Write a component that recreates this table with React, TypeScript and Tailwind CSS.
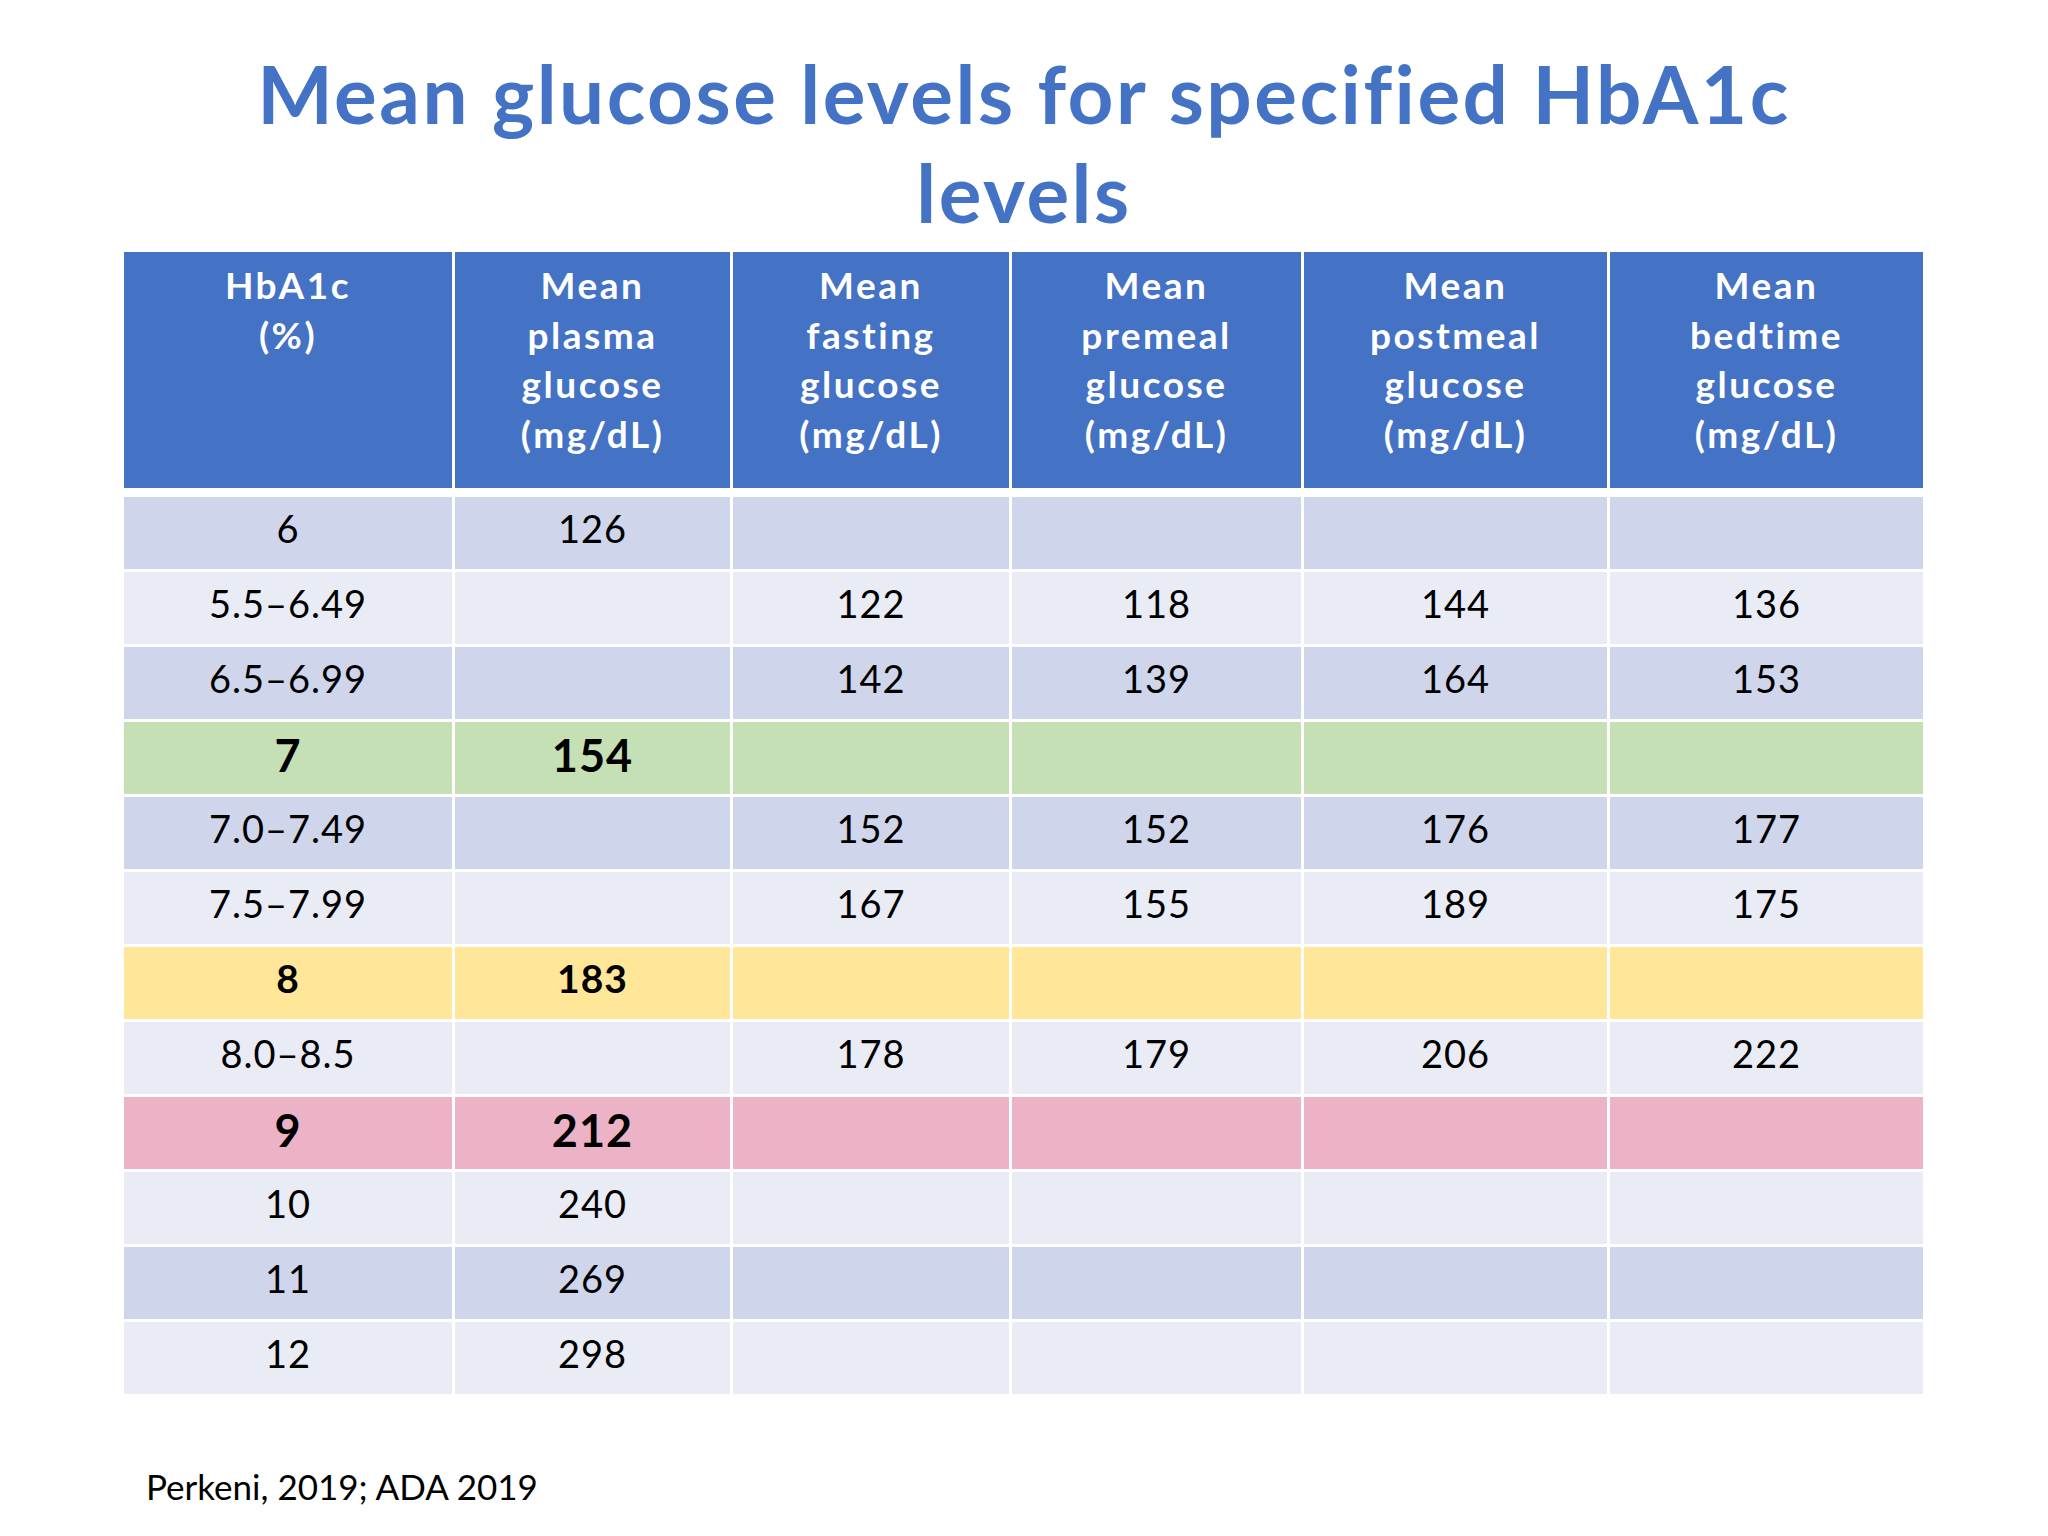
import React from 'react';

type Row = {
  cells: string[];
  tone: 'dark' | 'light' | 'green' | 'yellow' | 'pink';
  bold?: 'lg' | 'md';
};

const headers: string[][] = [
  ['HbA1c', '(%)'],
  ['Mean', 'plasma', 'glucose', '(mg/dL)'],
  ['Mean', 'fasting', 'glucose', '(mg/dL)'],
  ['Mean', 'premeal', 'glucose', '(mg/dL)'],
  ['Mean', 'postmeal', 'glucose', '(mg/dL)'],
  ['Mean', 'bedtime', 'glucose', '(mg/dL)'],
];

const rows: Row[] = [
  { cells: ['6', '126', '', '', '', ''], tone: 'dark' },
  { cells: ['5.5–6.49', '', '122', '118', '144', '136'], tone: 'light' },
  { cells: ['6.5–6.99', '', '142', '139', '164', '153'], tone: 'dark' },
  { cells: ['7', '154', '', '', '', ''], tone: 'green', bold: 'lg' },
  { cells: ['7.0–7.49', '', '152', '152', '176', '177'], tone: 'dark' },
  { cells: ['7.5–7.99', '', '167', '155', '189', '175'], tone: 'light' },
  { cells: ['8', '183', '', '', '', ''], tone: 'yellow', bold: 'md' },
  { cells: ['8.0–8.5', '', '178', '179', '206', '222'], tone: 'light' },
  { cells: ['9', '212', '', '', '', ''], tone: 'pink', bold: 'lg' },
  { cells: ['10', '240', '', '', '', ''], tone: 'light' },
  { cells: ['11', '269', '', '', '', ''], tone: 'dark' },
  { cells: ['12', '298', '', '', '', ''], tone: 'light' },
];

const toneClass: Record<Row['tone'], string> = {
  dark: 'bg-[#cfd5ea]',
  light: 'bg-[#e9ebf5]',
  green: 'bg-[#c5e0b4]',
  yellow: 'bg-[#ffe699]',
  pink: 'bg-[#ecb3c7]',
};

const textClass = (bold?: Row['bold']) => {
  if (bold === 'lg') return 'text-[45px] font-bold pb-[4px]';
  if (bold === 'md') return 'text-[39px] font-bold pb-[10px]';
  return 'text-[38px] pb-[10px]';
};

const cols = 'grid grid-cols-[328px_275px_276px_289px_303px_313px] gap-x-[3px]';

export default function App() {
  return (
    <div className="w-[2048px] h-[1536px] bg-white font-[family-name:Lato,sans-serif] text-black">
      <h1 className="pt-[44px] text-center text-[80px] leading-[99px] font-bold tracking-[2.5px] text-[#4472c4]">
        Mean glucose levels for specified HbA1c
        <br />
        levels
      </h1>

      <div className="mt-[10px] ml-[124px] w-[1799px]">
        <div className={`${cols} bg-white`}>
          {headers.map((lines, i) => (
            <div
              key={i}
              className="h-[236px] bg-[#4472c4] pt-[8px] text-center text-[37px] leading-[49.5px] font-bold tracking-[2.5px] text-white"
            >
              {lines.map((l) => (
                <div key={l}>{l}</div>
              ))}
            </div>
          ))}
        </div>

        <div className="mt-[9px] flex flex-col gap-y-[3px]">
          {rows.map((row, r) => (
            <div key={r} className={cols}>
              {row.cells.map((c, i) => (
                <div
                  key={i}
                  className={`flex h-[72px] items-center justify-center tracking-[1px] ${toneClass[row.tone]} ${textClass(row.bold)}`}
                >
                  {c}
                </div>
              ))}
            </div>
          ))}
        </div>
      </div>

      <p className="mt-[71px] ml-[146px] text-[35px] leading-[42px]">Perkeni, 2019; ADA 2019</p>
    </div>
  );
}
